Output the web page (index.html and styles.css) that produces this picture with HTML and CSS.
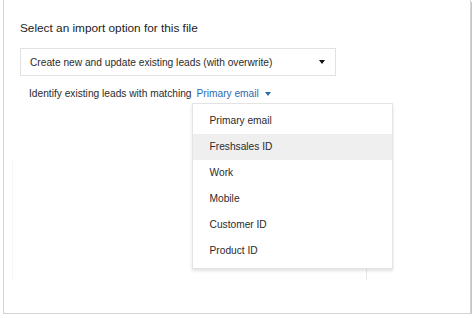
FILE: index.html
```html
<!DOCTYPE html>
<html lang="en">
<head>
    <meta charset="UTF-8">
    <title>Import options</title>
    <link rel="stylesheet" href="styles.css">
</head>
<body>
    <div class="panel">
        <h2 class="title">Select an import option for this file</h2>

        <div class="select">
            <span>Create new and update existing leads (with overwrite)</span>
            <span class="caret dark"></span>
        </div>

        <div class="match-row">
            <span>Identify existing leads with matching</span>
            <div class="match">
                <span class="match-link">Primary email <span class="caret blue"></span></span>

                <ul class="menu">
                    <li>Primary email</li>
                    <li class="hover">Freshsales ID</li>
                    <li>Work</li>
                    <li>Mobile</li>
                    <li>Customer ID</li>
                    <li>Product ID</li>
                </ul>
            </div>
        </div>

        <!-- ghost of the mapping table under the menu -->
        <div class="behind"></div>
    </div>
</body>
</html>
```

FILE: styles.css
```css
* {
    margin: 0;
    padding: 0;
    box-sizing: border-box;
}

body {
    margin: 0;
    background: #fff;
    font-family: "Liberation Sans", Arial, sans-serif;
    color: #2b2b2b;
}

.panel {
    margin-left: 3px;
    width: 468px;
    height: 314px;
    padding: 20px 0 0 16px;
    border: 1px solid #d4d4d4;
    border-top: none;
    box-shadow: 1px 2px 0 #c4c4c4;
    position: relative;
}

.title {
    font-size: 11.8px;
    font-weight: normal;
    line-height: 16px;
    color: #222;
}

.select {
    margin-top: 12px;
    width: 316px;
    height: 28px;
    border: 1px solid #e2e2e2;
    display: flex;
    align-items: center;
    justify-content: space-between;
    padding: 0 10px 0 9px;
    font-size: 10.2px;
}

.caret {
    display: inline-block;
    width: 0;
    height: 0;
    border-left: 3.5px solid transparent;
    border-right: 3.5px solid transparent;
    border-top: 4px solid #111;
}

.caret.blue {
    border-top-color: #2a6cb4;
    margin-left: 3px;
    vertical-align: 1px;
}

.match-row {
    margin-top: 10px;
    padding-left: 9px;
    display: flex;
    align-items: center;
    gap: 5px;
    font-size: 10.2px;
    line-height: 16px;
}

.match {
    position: relative;
}

.match-link {
    color: #2a6cb4;
}

.menu {
    position: absolute;
    top: 17px;
    left: -5px;
    width: 201px;
    list-style: none;
    padding: 4px 0;
    background: #fff;
    border: 1px solid #e4e4e4;
    box-shadow: 0 2px 3px rgba(0, 0, 0, 0.12);
    z-index: 2;
}

.menu li {
    height: 26px;
    line-height: 26px;
    padding-left: 17px;
    font-size: 10.2px;
    color: #2b2b2b;
}

.menu li.hover {
    background: #efefef;
}

.behind {
    margin: 58px 0 0 -8px;
    width: 355px;
    height: 120px;
    border-left: 1px solid #f7f7f7;
    border-right: 1px solid #e8e8e8;
}
```
